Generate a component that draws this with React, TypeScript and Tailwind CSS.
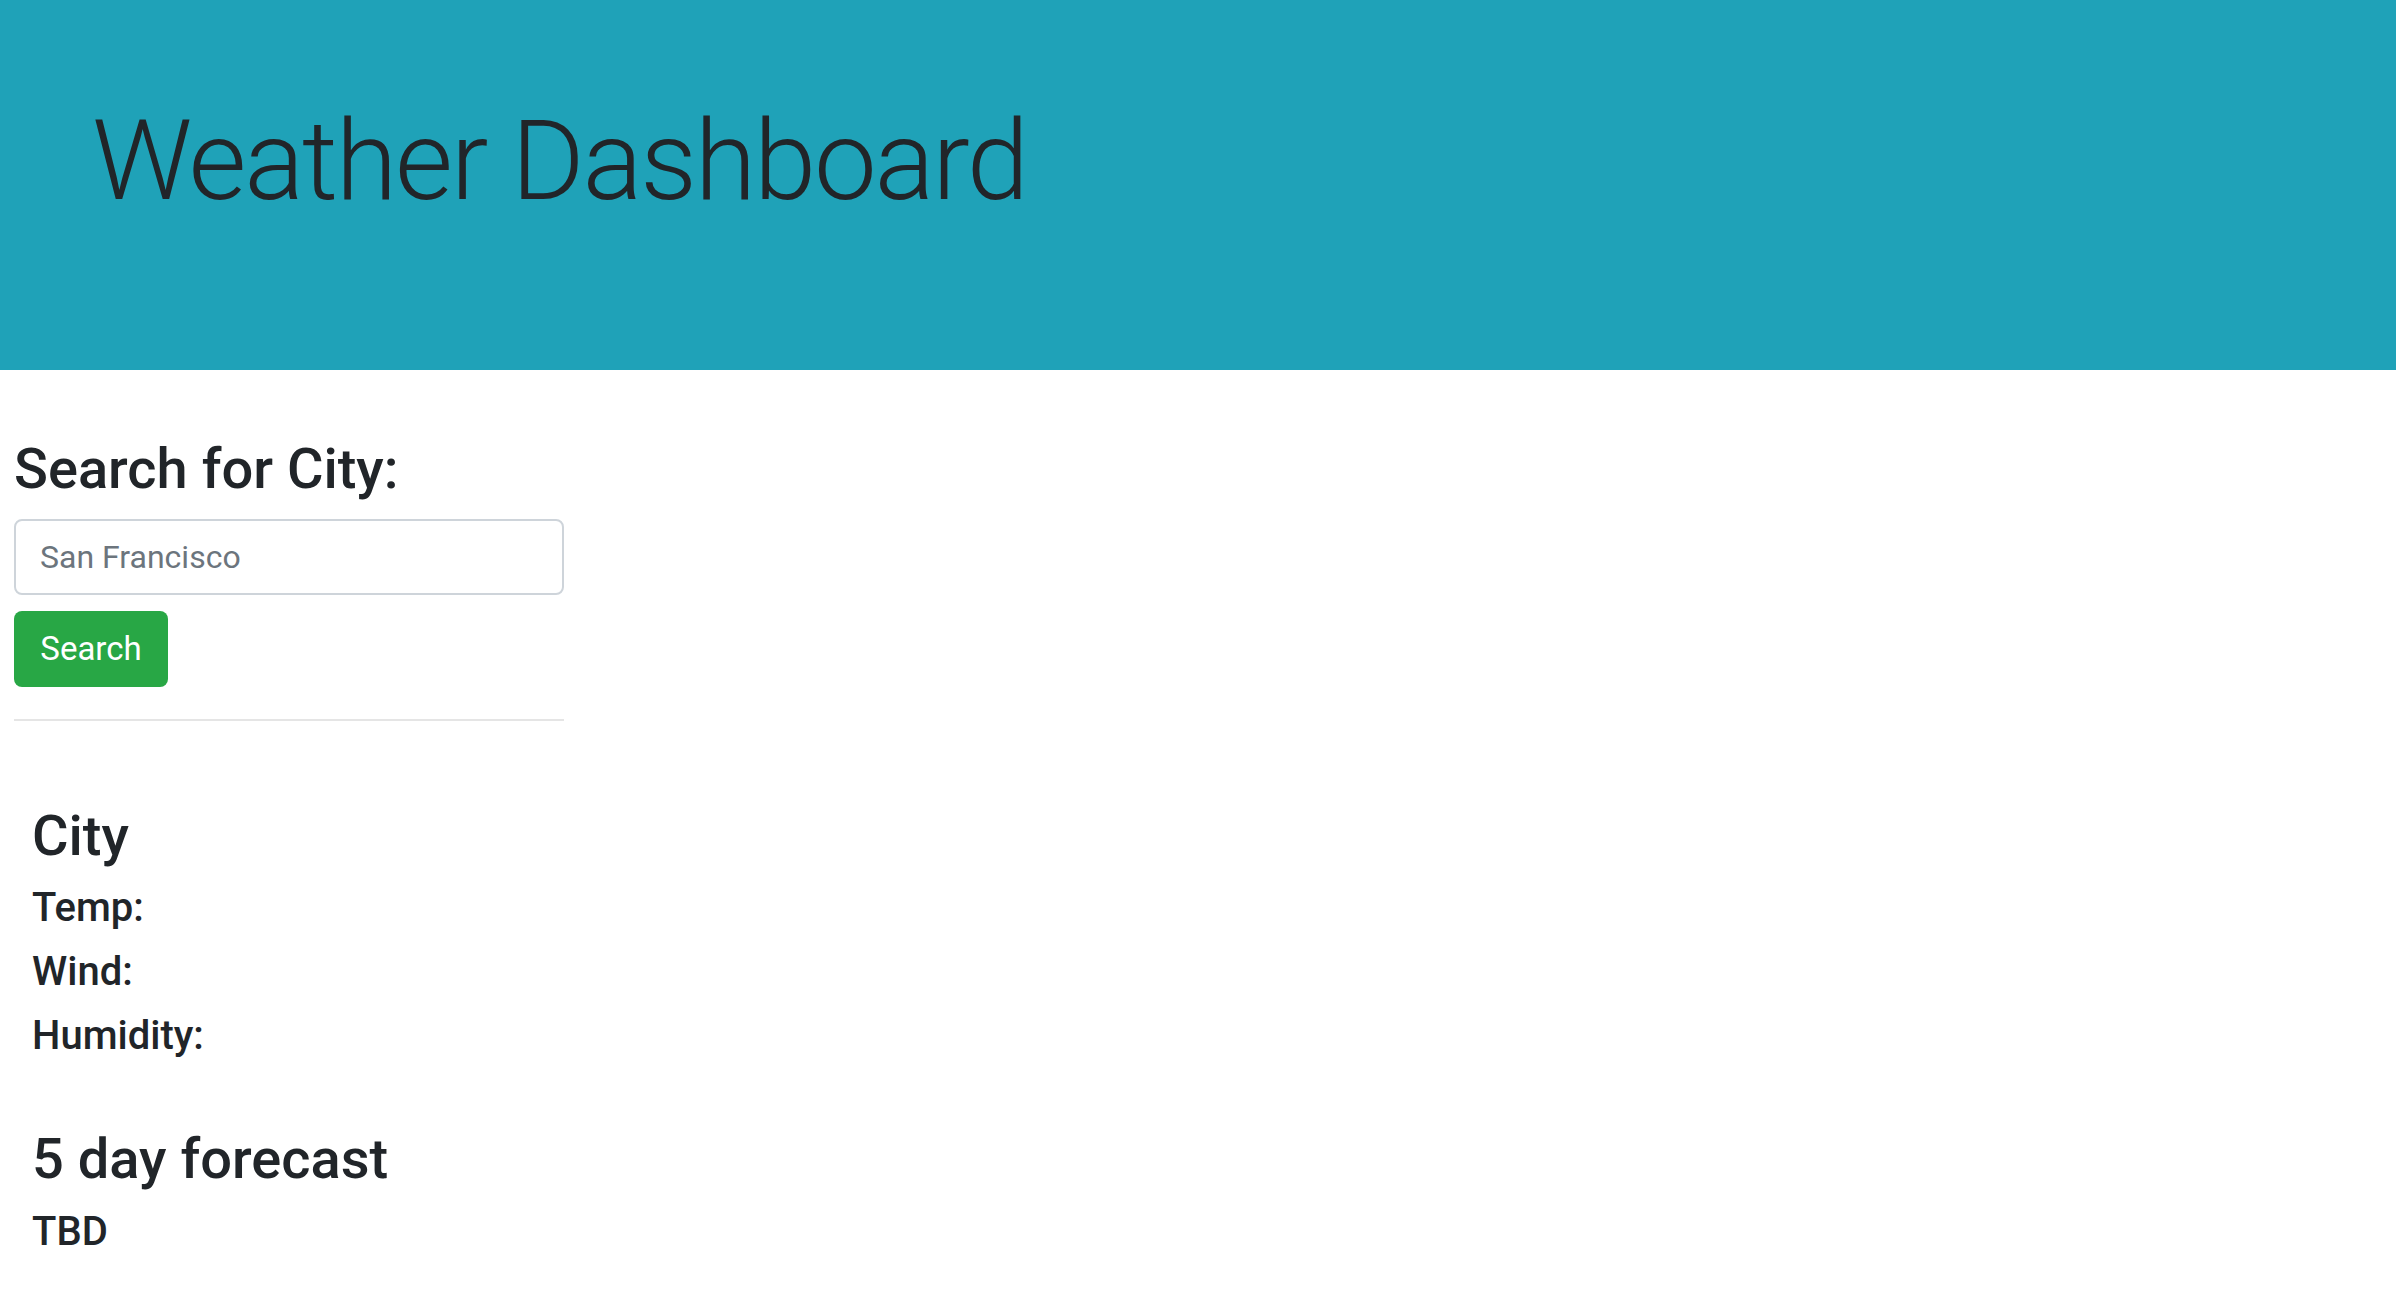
import React from "react";

export default function App() {
  return (
    <div className="min-h-screen bg-white font-['Roboto','Liberation_Sans',sans-serif] text-[#212529]">
      <header className="h-[370px] bg-[#1fa2b8] pl-[92px] pt-[94px]">
        <h1 className="text-[112px] font-light leading-[1.2] tracking-[-0.02em]">Weather Dashboard</h1>
      </header>
      <main className="px-[14px] pt-[66px]">
        <div className="w-[550px]">
          <h3 className="mb-[16px] text-[56px] font-medium leading-[1.2]">Search for City:</h3>
          <input
            type="text"
            placeholder="San Francisco"
            className="block h-[76px] w-full rounded-[8px] border-2 border-[#ced4da] bg-white px-[24px] text-[32px] text-[#495057] placeholder:text-[#6c757d] outline-none"
          />
          <button className="mt-[16px] h-[76px] w-[154px] rounded-[8px] bg-[#28a745] text-center text-[33px] text-white">
            Search
          </button>
          <hr className="my-[32px] border-t-2 border-[#e5e5e5]" />
        </div>
        <section className="pl-[18px] pt-[50px]">
          <h3 className="mb-[14px] text-[56px] font-medium leading-[1.2]">City</h3>
          <h5 className="mb-[16px] text-[40px] font-medium leading-[1.2]">Temp:</h5>
          <h5 className="mb-[16px] text-[40px] font-medium leading-[1.2]">Wind:</h5>
          <h5 className="mb-[16px] text-[40px] font-medium leading-[1.2]">Humidity:</h5>
        </section>
        <section className="pl-[18px] pt-[50px]">
          <h3 className="mb-[14px] text-[56px] font-medium leading-[1.2]">5 day forecast</h3>
          <h5 className="text-[40px] font-medium leading-[1.2]">TBD</h5>
        </section>
      </main>
    </div>
  );
}
